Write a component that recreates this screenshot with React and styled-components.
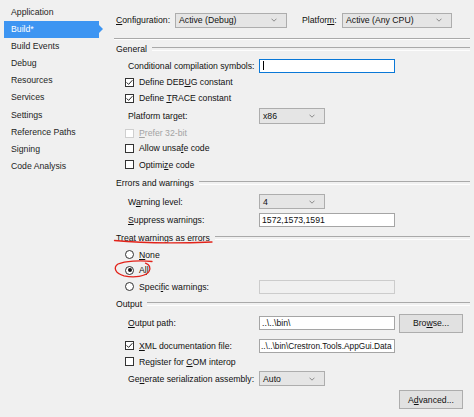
import React from 'react';
import styled, { createGlobalStyle, css } from 'styled-components';

const GlobalStyle = createGlobalStyle`
  html, body { margin: 0; padding: 0; background: #f0f0f0; }
  body {
    font-family: "Liberation Sans", Arial, sans-serif;
    font-size: 8.7px;
    color: #111;
  }
  * { box-sizing: border-box; }
`;

const Page = styled.div`
  position: relative;
  display: flex;
  width: 474px;
  height: 417px;
  overflow: hidden;
  background: #f0f0f0;
`;

const Sidebar = styled.nav`
  width: 114px;
  flex: none;
  padding-top: 3.5px;
  display: flex;
  flex-direction: column;
`;

const NavItem = styled.div`
  position: relative;
  height: 17.2px;
  line-height: 17.2px;
  margin-left: 4px;
  width: 95px;
  padding-left: 7px;
  color: #1e1e1e;
  white-space: nowrap;
  ${(p) =>
    p.$active &&
    css`
      background: #3d95f2;
      color: #fff;
      &::after {
        content: '';
        position: absolute;
        right: -4px;
        top: 50%;
        margin-top: -4px;
        border-left: 4px solid #3d95f2;
        border-top: 4px solid transparent;
        border-bottom: 4px solid transparent;
      }
    `}
`;

const Content = styled.main`
  flex: 1;
  padding-right: 4px;
  display: flex;
  flex-direction: column;
`;

const ConfigRow = styled.div`
  height: 38px;
  padding-top: 2px;
  padding-left: 2px;
  display: flex;
  align-items: center;
`;

const ConfigLabel = styled.span`
  width: ${(p) => p.$w}px;
  margin-left: ${(p) => p.$ml || 0}px;
  flex: none;
  white-space: nowrap;
`;

const Separator = styled.div`
  height: 2px;
  border-top: 1px solid #a9a9a9;
  border-bottom: 1px solid #fdfdfd;
`;

const SectionHeader = styled.div`
  height: ${(p) => p.$h}px;
  display: flex;
  align-items: center;
  padding-left: 2px;
  white-space: nowrap;
  &::after {
    content: '';
    flex: 1;
    height: 2px;
    margin-left: 5px;
    border-top: 1px solid #a9a9a9;
    border-bottom: 1px solid #fdfdfd;
  }
`;

const Row = styled.div`
  height: ${(p) => p.$h}px;
  display: flex;
  align-items: center;
  padding-left: ${(p) => p.$indent}px;
  white-space: nowrap;
`;

const Label = styled.span`
  width: ${(p) => p.$w}px;
  flex: none;
  color: ${(p) => (p.$disabled ? '#a3a3a3' : 'inherit')};
`;

const Text = styled.span`
  color: ${(p) => (p.$disabled ? '#a3a3a3' : 'inherit')};
`;

const Key = styled.u`
  text-decoration: underline;
  text-underline-offset: 1px;
`;

const Box = styled.span`
  width: 9px;
  height: 9px;
  flex: none;
  margin-right: 5px;
  background: #fff;
  border: 1px solid ${(p) => (p.$disabled ? '#cfcfcf' : '#333')};
  display: flex;
  align-items: center;
  justify-content: center;
`;

const Radio = styled.span`
  width: 9px;
  height: 9px;
  flex: none;
  margin-right: 5px;
  background: #fff;
  border: 1px solid #333;
  border-radius: 50%;
  display: flex;
  align-items: center;
  justify-content: center;
  &::after {
    content: '';
    width: 4px;
    height: 4px;
    border-radius: 50%;
    background: ${(p) => (p.$checked ? '#1a1a1a' : 'transparent')};
  }
`;

const TextBox = styled.div`
  position: relative;
  width: ${(p) => p.$w || 136}px;
  height: 14px;
  flex: none;
  background: ${(p) => (p.$disabled ? '#f0f0f0' : '#fff')};
  border: 1px solid
    ${(p) => (p.$focus ? '#0a78d7' : p.$disabled ? '#cccccc' : '#a5a5a5')};
  padding-left: ${(p) => (p.$tight ? 1 : 2)}px;
  font-size: ${(p) => (p.$tight ? 8.3 : 8.7)}px;
  line-height: 12px;
  overflow: hidden;
  white-space: nowrap;
`;

const Caret = styled.span`
  position: absolute;
  left: 3px;
  top: 1.5px;
  width: 1px;
  height: 9px;
  background: #000;
`;

const Select = styled.div`
  width: ${(p) => p.$w}px;
  height: ${(p) => p.$h || 16}px;
  flex: none;
  background: #e5e5e5;
  border: 1px solid #adadad;
  display: flex;
  align-items: center;
  justify-content: space-between;
  padding: 0 9px 0 3px;
`;

const Button = styled.div`
  width: 64px;
  height: 19px;
  flex: none;
  margin-left: ${(p) => p.$ml || 0}px;
  background: #e1e1e1;
  border: 1px solid #adadad;
  display: flex;
  align-items: center;
  justify-content: center;
`;

const Overlay = styled.svg`
  position: absolute;
  left: 0;
  top: 0;
  pointer-events: none;
`;

const Chevron = () => (
  <svg width="6" height="4" viewBox="0 0 6 4">
    <polyline points="0.5,0.7 3,3.2 5.5,0.7" fill="none" stroke="#8a8a8a" strokeWidth="1" />
  </svg>
);

const Check = () => (
  <svg width="7" height="7" viewBox="0 0 7 7">
    <polyline points="0.6,3.4 2.6,5.4 6.4,1.2" fill="none" stroke="#222" strokeWidth="1" />
  </svg>
);

const CheckBox = ({ checked, disabled }) => (
  <Box $disabled={disabled}>{checked && <Check />}</Box>
);

const navItems = [
  'Application',
  'Build*',
  'Build Events',
  'Debug',
  'Resources',
  'Services',
  'Settings',
  'Reference Paths',
  'Signing',
  'Code Analysis',
];

export default function App() {
  return (
    <>
      <GlobalStyle />
      <Page>
        <Sidebar>
          {navItems.map((n) => (
            <NavItem key={n} $active={n === 'Build*'}>
              {n}
            </NavItem>
          ))}
        </Sidebar>
        <Content>
          <ConfigRow>
            <ConfigLabel $w={59}>
              <Key>C</Key>onfiguration:
            </ConfigLabel>
            <Select $w={112} $h={15}>
              <span>Active (Debug)</span>
              <Chevron />
            </Select>
            <ConfigLabel $w={40} $ml={15}>
              Platfor<Key>m</Key>:
            </ConfigLabel>
            <Select $w={110} $h={15}>
              <span>Active (Any CPU)</span>
              <Chevron />
            </Select>
          </ConfigRow>
          <Separator />

          <SectionHeader $h={17}>General</SectionHeader>
          <Row $h={17.5} $indent={14}>
            <Label $w={131}>Conditional compilation symbols:</Label>
            <TextBox $focus>
              <Caret />
            </TextBox>
          </Row>
          <Row $h={15.5} $indent={11}>
            <CheckBox checked />
            <Text>
              Define DEB<Key>U</Key>G constant
            </Text>
          </Row>
          <Row $h={16} $indent={11}>
            <CheckBox checked />
            <Text>
              Define <Key>T</Key>RACE constant
            </Text>
          </Row>
          <Row $h={20} $indent={14}>
            <Label $w={131}>Platform target:</Label>
            <Select $w={66}>
              <span>x86</span>
              <Chevron />
            </Select>
          </Row>
          <Row $h={14} $indent={11}>
            <CheckBox disabled />
            <Text $disabled>
              <Key>P</Key>refer 32-bit
            </Text>
          </Row>
          <Row $h={16.5} $indent={11}>
            <CheckBox />
            <Text>
              Allow unsa<Key>f</Key>e code
            </Text>
          </Row>
          <Row $h={16} $indent={11}>
            <CheckBox />
            <Text>
              Optimi<Key>z</Key>e code
            </Text>
          </Row>

          <SectionHeader $h={20.5}>Errors and warnings</SectionHeader>
          <Row $h={17} $indent={14}>
            <Label $w={131}>
              W<Key>a</Key>rning level:
            </Label>
            <Select $w={66} $h={15}>
              <span>4</span>
              <Chevron />
            </Select>
          </Row>
          <Row $h={19} $indent={14}>
            <Label $w={131}>
              <Key>S</Key>uppress warnings:
            </Label>
            <TextBox>1572,1573,1591</TextBox>
          </Row>

          <SectionHeader $h={17}>Treat warnings as errors</SectionHeader>
          <Row $h={17.5} $indent={11}>
            <Radio />
            <Text>
              <Key>N</Key>one
            </Text>
          </Row>
          <Row $h={13} $indent={11}>
            <Radio $checked />
            <Text>
              A<Key>l</Key>l
            </Text>
          </Row>
          <Row $h={20} $indent={11}>
            <Radio />
            <Label $w={120}>
              Speci<Key>f</Key>ic warnings:
            </Label>
            <TextBox $disabled />
          </Row>

          <SectionHeader $h={15}>Output</SectionHeader>
          <Row $h={23.5} $indent={14}>
            <Label $w={131}>
              <Key>O</Key>utput path:
            </Label>
            <TextBox>..\..\bin\</TextBox>
            <Button $ml={4}>
              Bro<Key>w</Key>se...
            </Button>
          </Row>
          <Row $h={21} $indent={11}>
            <CheckBox checked />
            <Label $w={120}>
              <Key>X</Key>ML documentation file:
            </Label>
            <TextBox $tight>..\..\bin\Crestron.Tools.AppGui.Data</TextBox>
          </Row>
          <Row $h={11} $indent={11}>
            <CheckBox />
            <Text>
              Register for <Key>C</Key>OM interop
            </Text>
          </Row>
          <Row $h={23} $indent={14}>
            <Label $w={131}>
              Ge<Key>n</Key>erate serialization assembly:
            </Label>
            <Select $w={66} $h={15}>
              <span>Auto</span>
              <Chevron />
            </Select>
          </Row>
          <Row $h={19} $indent={285}>
            <Button>
              A<Key>d</Key>vanced...
            </Button>
          </Row>
        </Content>
        <Overlay width="474" height="417" viewBox="0 0 474 417">
          <path
            d="M114.5 240.5 C 135 242.5, 160 244, 212 242"
            fill="none"
            stroke="#e2231a"
            strokeWidth="1.3"
            strokeLinecap="round"
          />
          <path
            d="M152 261.5 C 140 260, 125 261, 118 264 C 113 267.5, 115 273.5, 124 275.8 C 134 278, 146 276.5, 149 271.5 C 151 267.5, 149.5 264.5, 145.5 263.2"
            fill="none"
            stroke="#e2231a"
            strokeWidth="1.3"
            strokeLinecap="round"
          />
        </Overlay>
      </Page>
    </>
  );
}
